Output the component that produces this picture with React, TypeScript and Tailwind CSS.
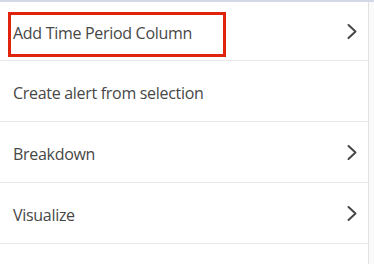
const ITEMS = [
  { label: 'Add Time Period Column', sub: true, highlight: true },
  { label: 'Create alert from selection', sub: false },
  { label: 'Breakdown', sub: true },
  { label: 'Visualize', sub: true },
  { label: '', sub: false },
];

function Chevron() {
  return (
    <svg width="12" height="17" viewBox="0 0 12 17" fill="none" className="shrink-0">
      <path d="M2.5 2 L9.5 8.5 L2.5 15" stroke="#474747" strokeWidth="2" strokeLinecap="round" strokeLinejoin="round" />
    </svg>
  );
}

export default function App() {
  return (
    <div
      className="w-full h-[264px] overflow-hidden bg-white flex flex-col"
      style={{ fontFamily: '"Open Sans", "Noto Sans", sans-serif' }}
    >
      <div className="h-[2px] shrink-0 bg-[#d3d9e6]" />
      <div className="flex flex-1 min-h-0">
        <ul className="flex-1 min-w-0">
          {ITEMS.map((item, i) => (
            <li
              key={i}
              className={`relative flex items-center justify-between pl-[13px] pr-[10px] border-b border-[#e8e8e8] text-[16px] text-[#474747] ${
                i === 0 ? 'h-[59px]' : 'h-[61px]'
              }`}
            >
              <span className="pt-[4px] tracking-[-0.3px]">{item.label}</span>
              {item.sub && <Chevron />}
              {item.highlight && (
                <div className="absolute left-[8px] top-[10px] w-[218px] h-[45px] border-[3px] border-[#e0240c] pointer-events-none" />
              )}
            </li>
          ))}
        </ul>
        <div className="w-[6px] shrink-0 border-l border-[#e2e2e2] bg-[#fafafa]" />
      </div>
    </div>
  );
}
